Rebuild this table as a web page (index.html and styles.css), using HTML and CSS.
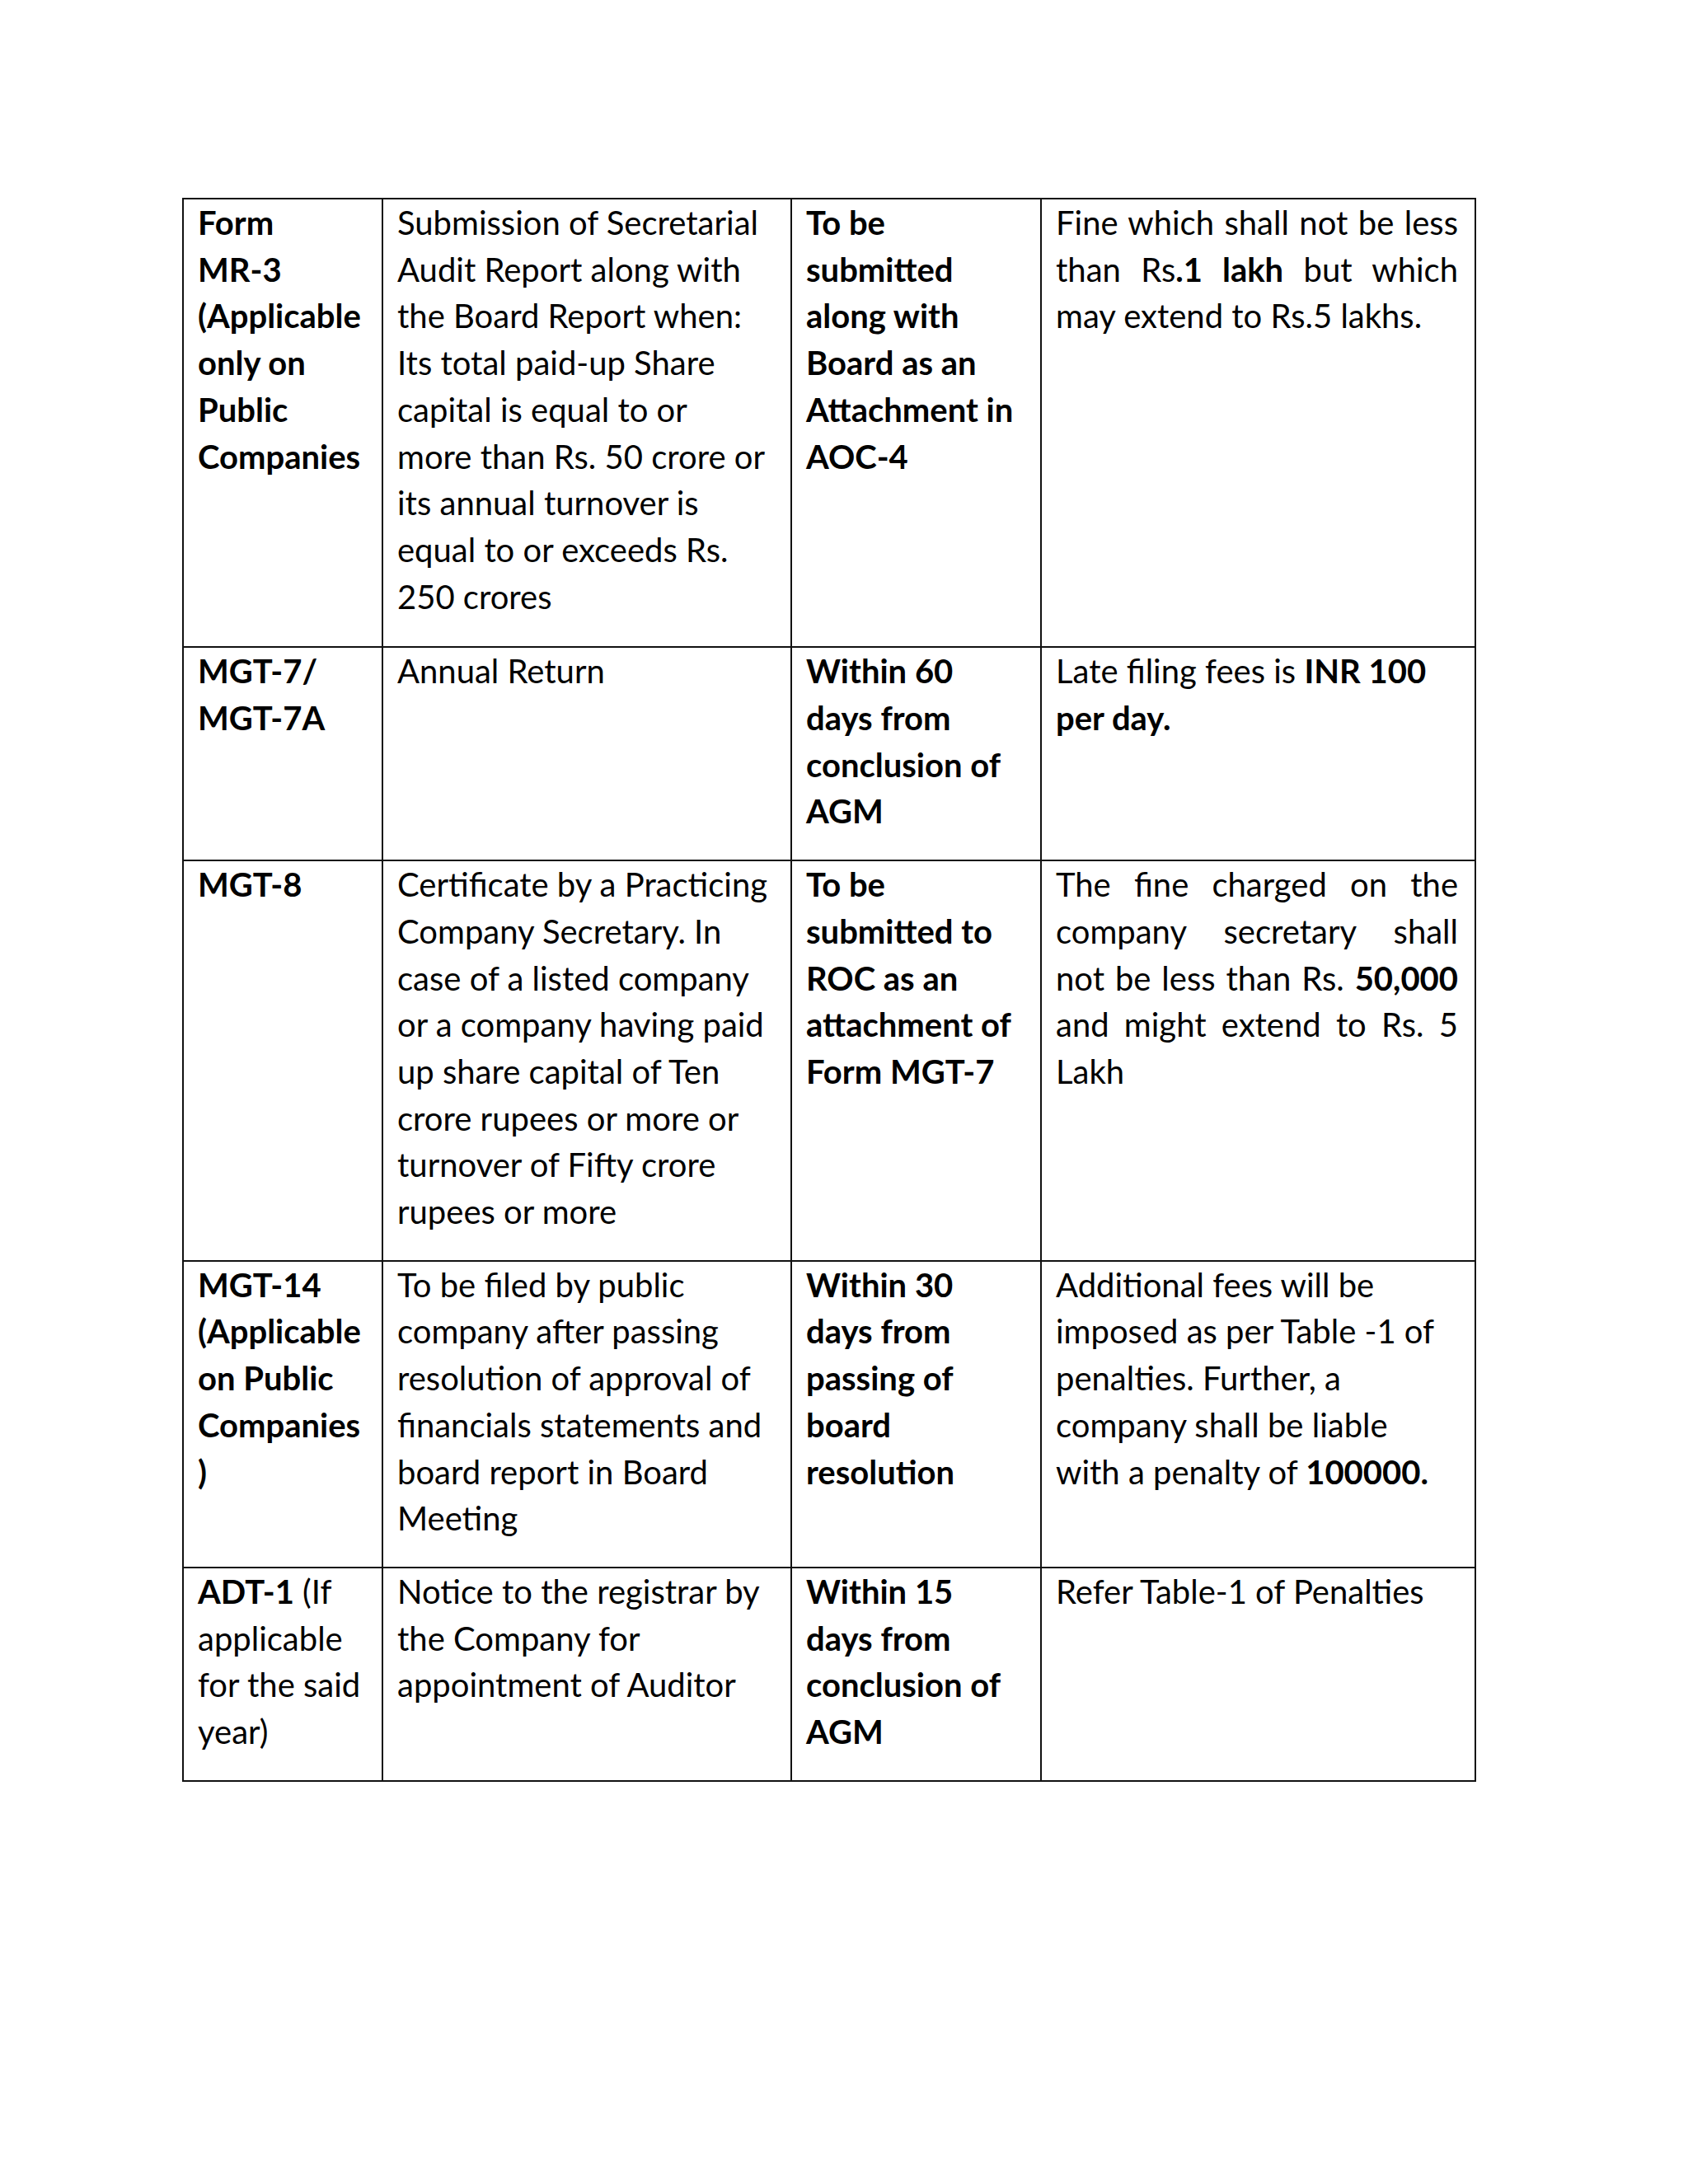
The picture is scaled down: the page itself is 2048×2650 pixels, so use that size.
FILE: index.html
```html
<!DOCTYPE html>
<html lang="en">
<head>
<meta charset="utf-8">
<title>Forms table</title>
<link rel="stylesheet" href="styles.css">
</head>
<body>
<div class="page">
<table class="forms">
  <colgroup>
    <col class="c1"><col class="c2"><col class="c3"><col class="c4">
  </colgroup>
  <tbody>
    <tr class="first">
      <td class="b">Form<br>MR-3<br>(Applicable<br>only on<br>Public<br>Companies</td>
      <td>Submission of Secretarial<br>Audit Report along with<br>the Board Report when:<br>Its total paid-up Share<br>capital is equal to or<br>more than Rs. 50 crore or<br>its annual turnover is<br>equal to or exceeds Rs.<br>250 crores</td>
      <td class="b">To be<br>submitted<br>along with<br>Board as an<br>Attachment in<br>AOC-4</td>
      <td><span class="jl">Fine which shall not be less</span><span class="jl">than Rs<b>.1 lakh</b> but which</span><span class="ll">may extend to Rs.5 lakhs.</span></td>
    </tr>
    <tr>
      <td class="b">MGT-7/<br>MGT-7A</td>
      <td>Annual Return</td>
      <td class="b">Within 60<br>days from<br>conclusion of<br>AGM</td>
      <td>Late filing fees is <b>INR 100</b><br><b>per day.</b></td>
    </tr>
    <tr>
      <td class="b">MGT-8</td>
      <td>Certificate by a Practicing<br>Company Secretary. In<br>case of a listed company<br>or a company having paid<br>up share capital of Ten<br>crore rupees or more or<br>turnover of Fifty crore<br>rupees or more</td>
      <td class="b">To be<br>submitted to<br>ROC as an<br>attachment of<br>Form MGT-7</td>
      <td><span class="jl">The fine charged on the</span><span class="jl">company secretary shall</span><span class="jl">not be less than Rs. <b>50,000</b></span><span class="jl">and might extend to Rs. 5</span><span class="ll">Lakh</span></td>
    </tr>
    <tr>
      <td class="b">MGT-14<br>(Applicable<br>on Public<br>Companies<br>)</td>
      <td>To be filed by public<br>company after passing<br>resolution of approval of<br>financials statements and<br>board report in Board<br>Meeting</td>
      <td class="b">Within 30<br>days from<br>passing of<br>board<br>resolution</td>
      <td>Additional fees will be<br>imposed as per Table -1 of<br>penalties. Further, a<br>company shall be liable<br>with a penalty of <b>100000.</b></td>
    </tr>
    <tr>
      <td><b>ADT-1</b> (If<br>applicable<br>for the said<br>year)</td>
      <td>Notice to the registrar by<br>the Company for<br>appointment of Auditor</td>
      <td class="b">Within 15<br>days from<br>conclusion of<br>AGM</td>
      <td>Refer Table-1 of Penalties</td>
    </tr>
  </tbody>
</table>
</div>
</body>
</html>
```
FILE: styles.css
```css
html, body {
  margin: 0;
  padding: 0;
  background: #ffffff;
}
.page {
  width: 2048px;
  min-height: 2650px;
  padding: 240px 0 0 221px;
  box-sizing: border-box;
}
.forms {
  border-collapse: collapse;
  table-layout: fixed;
  width: 1568px;
  font-family: Lato, "Open Sans", "Liberation Sans", sans-serif;
  font-size: 40px;
  line-height: 56.7px;
  color: #000;
}
.c1 { width: 242px; }
.c2 { width: 496px; }
.c3 { width: 303px; }
.c4 { width: 527px; }
.forms td {
  border: 2px solid #111;
  vertical-align: top;
  padding: 0 20px 30px 17px;
  white-space: nowrap;
  text-align: left;
}
.forms tr.first td {
  padding-bottom: 32px;
}
.forms td.b {
  font-weight: 700;
}
.forms b {
  font-weight: 700;
}
.jl {
  display: block;
  text-align: justify;
  text-align-last: justify;
}
.ll {
  display: block;
  text-align: left;
}
```
